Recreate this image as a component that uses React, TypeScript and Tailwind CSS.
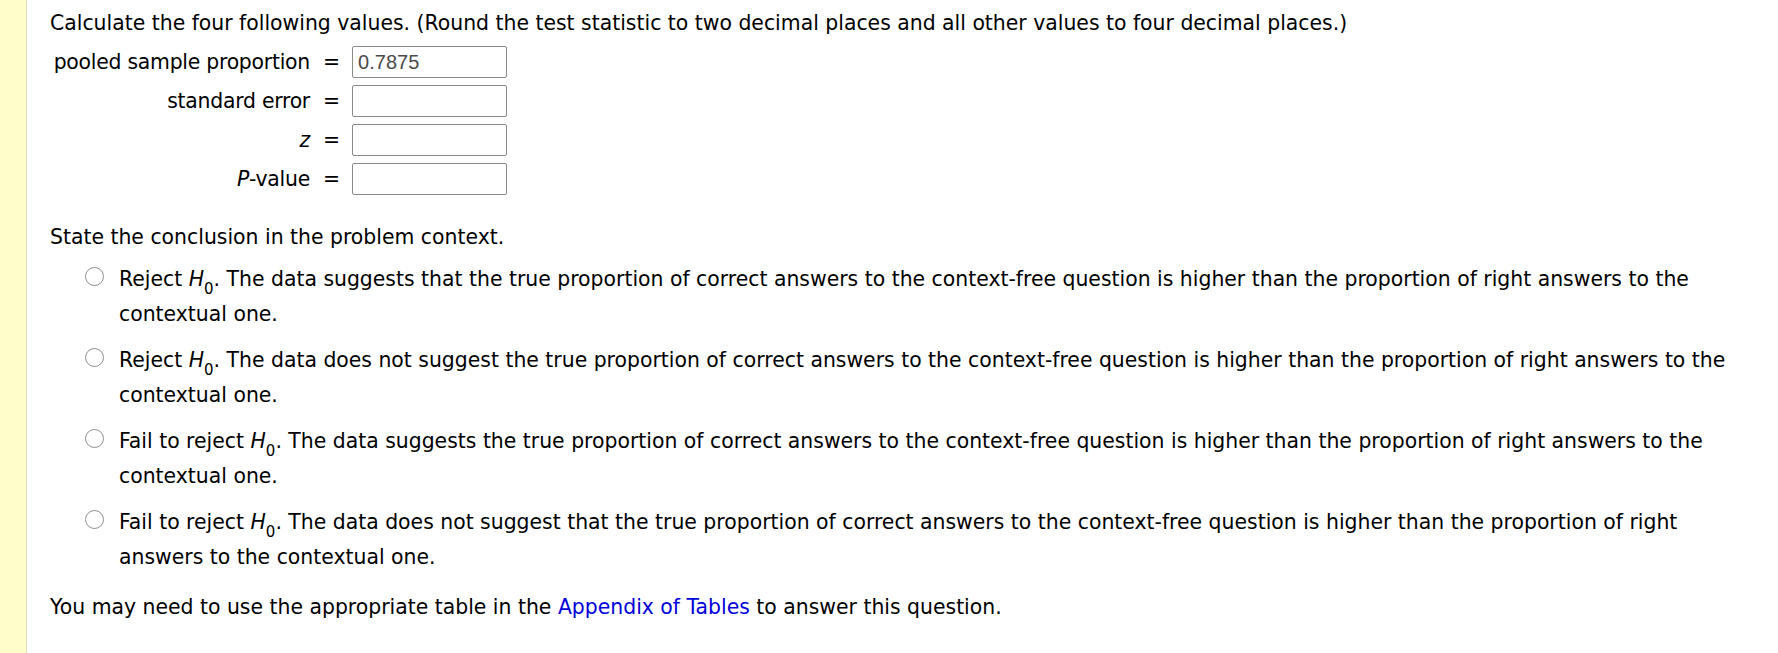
import React from "react";

const options = [
  {
    lead: "Reject",
    rest: "The data suggests that the true proportion of correct answers to the context-free question is higher than the proportion of right answers to the contextual one.",
  },
  {
    lead: "Reject",
    rest: "The data does not suggest the true proportion of correct answers to the context-free question is higher than the proportion of right answers to the contextual one.",
  },
  {
    lead: "Fail to reject",
    rest: "The data suggests the true proportion of correct answers to the context-free question is higher than the proportion of right answers to the contextual one.",
  },
  {
    lead: "Fail to reject",
    rest: "The data does not suggest that the true proportion of correct answers to the context-free question is higher than the proportion of right answers to the contextual one.",
  },
];

function H0() {
  return (
    <>
      <i>H</i>
      <sub className="not-italic text-[15px] -bottom-2">0</sub>
    </>
  );
}

function Field({ label, value }: { label: React.ReactNode; value?: string }) {
  return (
    <div className="flex items-center h-[32px]">
      <div className="w-[260px] shrink-0 whitespace-nowrap text-right leading-[35px] tracking-[-0.25px]">{label}</div>
      <span className="ml-[13px] mr-[12px] leading-[35px]">=</span>
      <div className="w-[155px] h-[32px] border border-[#8a8a8a] rounded-[2px] bg-white pl-[5px] flex items-center text-[20px] text-[#4a4a4a] font-['Liberation_Sans',Arial,sans-serif]">
        {value}
      </div>
    </div>
  );
}

export default function App() {
  return (
    <div className="flex min-h-screen bg-white text-black font-['DejaVu_Sans',Verdana,sans-serif] text-[20.4px]">
      <div className="w-[27px] shrink-0 bg-[#ffffcc] border-r border-[#dcdcb0]" />
      <div className="flex-1 pl-[23px] pr-[20px] pt-[6px]">
        <p className="leading-[35px]">
          Calculate the four following values. (Round the test statistic to two decimal places and all other values to four decimal places.)
        </p>

        <div className="mt-[5px] flex flex-col gap-[7px]">
          <Field label="pooled sample proportion" value="0.7875" />
          <Field label="standard error" />
          <Field label={<i>z</i>} />
          <Field
            label={
              <>
                <i>P</i>-value
              </>
            }
          />
        </div>

        <p className="mt-[25px] leading-[35px]">State the conclusion in the problem context.</p>

        <div className="mt-[7px] flex flex-col gap-[11px]">
          {options.map((o, i) => (
            <label key={i} className="flex pl-[35px]">
              <span className="mt-[5px] w-[19px] h-[19px] shrink-0 rounded-full border-[1.5px] border-[#8f8f8f] bg-white" />
              <span className="ml-[15px] leading-[35px]">
                {o.lead} <H0 />. {o.rest}
              </span>
            </label>
          ))}
        </div>

        <p className="mt-[15px] leading-[35px]">
          You may need to use the appropriate table in the{" "}
          <a className="text-[#0000d8]">Appendix of Tables</a> to answer this question.
        </p>
      </div>
    </div>
  );
}
